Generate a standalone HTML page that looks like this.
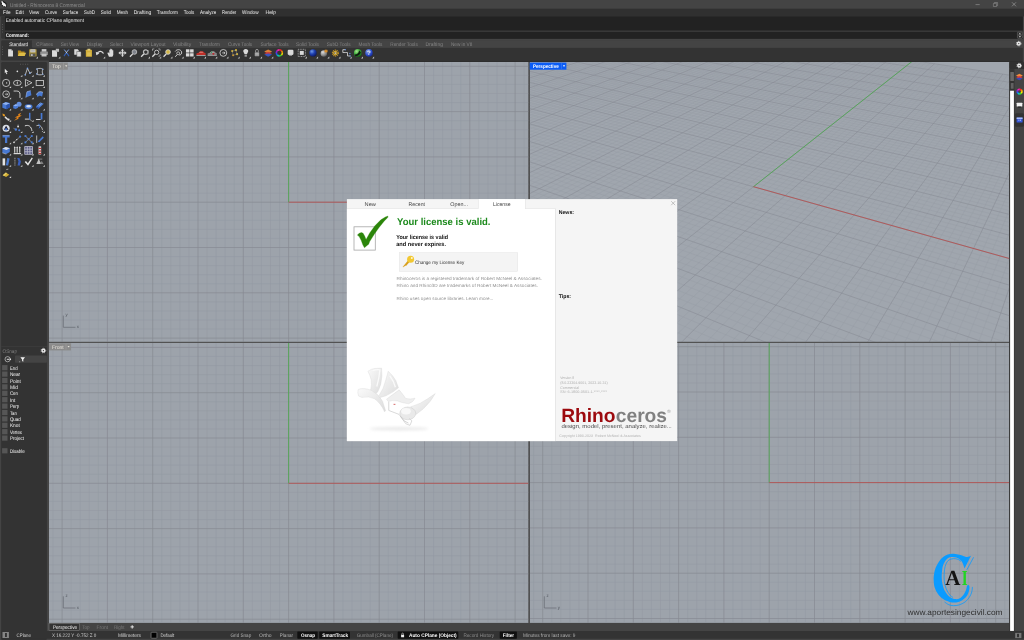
<!DOCTYPE html>
<html><head><meta charset="utf-8"><title>Rhinoceros 8</title>
<style>html,body{margin:0;padding:0;background:#333;overflow:hidden}svg{display:block;will-change:transform}text{white-space:pre}</style>
</head><body>
<svg width="1024" height="640" viewBox="0 0 1024 640" text-rendering="geometricPrecision">
<defs>
<radialGradient id="gblue" cx="0.35" cy="0.3" r="0.8"><stop offset="0" stop-color="#7aa8ff"/><stop offset="0.45" stop-color="#1d44c4"/><stop offset="1" stop-color="#040c58"/></radialGradient>
<radialGradient id="ggray" cx="0.35" cy="0.3" r="0.8"><stop offset="0" stop-color="#f4f4f4"/><stop offset="0.6" stop-color="#9a9a9a"/><stop offset="1" stop-color="#555"/></radialGradient>
<radialGradient id="ggreen" cx="0.35" cy="0.3" r="0.8"><stop offset="0" stop-color="#b8ff9a"/><stop offset="0.5" stop-color="#3ab83a"/><stop offset="1" stop-color="#0a5a0a"/></radialGradient>
<radialGradient id="ghelp" cx="0.35" cy="0.3" r="0.8"><stop offset="0" stop-color="#9ab8ff"/><stop offset="0.6" stop-color="#2a50e0"/><stop offset="1" stop-color="#10208a"/></radialGradient>
</defs>
<rect x="0.00" y="0.00" width="1024.00" height="640.00" fill="#444444" />
<g clip-path="url(#ct)">
<clipPath id="ct"><rect x="48.9" y="62.0" width="479.80000000000007" height="279.9"/></clipPath>
<rect x="48.90" y="62.00" width="479.80" height="279.90" fill="#9da3ab" />
<path d="M43.98 62.0V341.9M53.04 62.0V341.9M71.16 62.0V341.9M80.22 62.0V341.9M89.28 62.0V341.9M98.34 62.0V341.9M116.46 62.0V341.9M125.52 62.0V341.9M134.58 62.0V341.9M143.64 62.0V341.9M161.76 62.0V341.9M170.82 62.0V341.9M179.88 62.0V341.9M188.94 62.0V341.9M207.06 62.0V341.9M216.12 62.0V341.9M225.18 62.0V341.9M234.24 62.0V341.9M252.36 62.0V341.9M261.42 62.0V341.9M270.48 62.0V341.9M279.54 62.0V341.9M297.66 62.0V341.9M306.72 62.0V341.9M315.78 62.0V341.9M324.84 62.0V341.9M342.96 62.0V341.9M352.02 62.0V341.9M361.08 62.0V341.9M370.14 62.0V341.9M388.26 62.0V341.9M397.32 62.0V341.9M406.38 62.0V341.9M415.44 62.0V341.9M433.56 62.0V341.9M442.62 62.0V341.9M451.68 62.0V341.9M460.74 62.0V341.9M478.86 62.0V341.9M487.92 62.0V341.9M496.98 62.0V341.9M506.04 62.0V341.9M524.16 62.0V341.9M533.22 62.0V341.9M48.9 57.24H528.7M48.9 75.36H528.7M48.9 84.42H528.7M48.9 93.48H528.7M48.9 102.54H528.7M48.9 120.66H528.7M48.9 129.72H528.7M48.9 138.78H528.7M48.9 147.84H528.7M48.9 165.96H528.7M48.9 175.02H528.7M48.9 184.08H528.7M48.9 193.14H528.7M48.9 211.26H528.7M48.9 220.32H528.7M48.9 229.38H528.7M48.9 238.44H528.7M48.9 256.56H528.7M48.9 265.62H528.7M48.9 274.68H528.7M48.9 283.74H528.7M48.9 301.86H528.7M48.9 310.92H528.7M48.9 319.98H528.7M48.9 329.04H528.7M48.9 347.16H528.7" stroke="#9399a2" stroke-width="0.5" fill="none"/>
<path d="M62.10 62.0V341.9M107.40 62.0V341.9M152.70 62.0V341.9M198.00 62.0V341.9M243.30 62.0V341.9M288.60 62.0V341.9M333.90 62.0V341.9M379.20 62.0V341.9M424.50 62.0V341.9M469.80 62.0V341.9M515.10 62.0V341.9M48.9 66.30H528.7M48.9 111.60H528.7M48.9 156.90H528.7M48.9 202.20H528.7M48.9 247.50H528.7M48.9 292.80H528.7M48.9 338.10H528.7" stroke="#868a92" stroke-width="0.7" fill="none"/>
<path d="M288.60 202.20V62.0" stroke="#52a655" stroke-width="0.9" fill="none"/>
<path d="M288.60 202.20H528.7" stroke="#b25454" stroke-width="0.9" fill="none"/>
</g>
<g clip-path="url(#cf)">
<clipPath id="cf"><rect x="48.9" y="342.9" width="479.80000000000007" height="280.0"/></clipPath>
<rect x="48.90" y="342.90" width="479.80" height="280.00" fill="#9da3ab" />
<path d="M43.98 342.9V622.9M53.04 342.9V622.9M71.16 342.9V622.9M80.22 342.9V622.9M89.28 342.9V622.9M98.34 342.9V622.9M116.46 342.9V622.9M125.52 342.9V622.9M134.58 342.9V622.9M143.64 342.9V622.9M161.76 342.9V622.9M170.82 342.9V622.9M179.88 342.9V622.9M188.94 342.9V622.9M207.06 342.9V622.9M216.12 342.9V622.9M225.18 342.9V622.9M234.24 342.9V622.9M252.36 342.9V622.9M261.42 342.9V622.9M270.48 342.9V622.9M279.54 342.9V622.9M297.66 342.9V622.9M306.72 342.9V622.9M315.78 342.9V622.9M324.84 342.9V622.9M342.96 342.9V622.9M352.02 342.9V622.9M361.08 342.9V622.9M370.14 342.9V622.9M388.26 342.9V622.9M397.32 342.9V622.9M406.38 342.9V622.9M415.44 342.9V622.9M433.56 342.9V622.9M442.62 342.9V622.9M451.68 342.9V622.9M460.74 342.9V622.9M478.86 342.9V622.9M487.92 342.9V622.9M496.98 342.9V622.9M506.04 342.9V622.9M524.16 342.9V622.9M533.22 342.9V622.9M48.9 338.34H528.7M48.9 356.46H528.7M48.9 365.52H528.7M48.9 374.58H528.7M48.9 383.64H528.7M48.9 401.76H528.7M48.9 410.82H528.7M48.9 419.88H528.7M48.9 428.94H528.7M48.9 447.06H528.7M48.9 456.12H528.7M48.9 465.18H528.7M48.9 474.24H528.7M48.9 492.36H528.7M48.9 501.42H528.7M48.9 510.48H528.7M48.9 519.54H528.7M48.9 537.66H528.7M48.9 546.72H528.7M48.9 555.78H528.7M48.9 564.84H528.7M48.9 582.96H528.7M48.9 592.02H528.7M48.9 601.08H528.7M48.9 610.14H528.7M48.9 628.26H528.7" stroke="#9399a2" stroke-width="0.5" fill="none"/>
<path d="M62.10 342.9V622.9M107.40 342.9V622.9M152.70 342.9V622.9M198.00 342.9V622.9M243.30 342.9V622.9M288.60 342.9V622.9M333.90 342.9V622.9M379.20 342.9V622.9M424.50 342.9V622.9M469.80 342.9V622.9M515.10 342.9V622.9M48.9 347.40H528.7M48.9 392.70H528.7M48.9 438.00H528.7M48.9 483.30H528.7M48.9 528.60H528.7M48.9 573.90H528.7M48.9 619.20H528.7" stroke="#868a92" stroke-width="0.7" fill="none"/>
<path d="M288.60 483.30V342.9" stroke="#52a655" stroke-width="0.9" fill="none"/>
<path d="M288.60 483.30H528.7" stroke="#b25454" stroke-width="0.9" fill="none"/>
</g>
<g clip-path="url(#cr)">
<clipPath id="cr"><rect x="529.7" y="342.9" width="479.5999999999999" height="280.0"/></clipPath>
<rect x="529.70" y="342.90" width="479.60" height="280.00" fill="#9da3ab" />
<path d="M524.58 342.9V622.9M533.64 342.9V622.9M551.76 342.9V622.9M560.82 342.9V622.9M569.88 342.9V622.9M578.94 342.9V622.9M597.06 342.9V622.9M606.12 342.9V622.9M615.18 342.9V622.9M624.24 342.9V622.9M642.36 342.9V622.9M651.42 342.9V622.9M660.48 342.9V622.9M669.54 342.9V622.9M687.66 342.9V622.9M696.72 342.9V622.9M705.78 342.9V622.9M714.84 342.9V622.9M732.96 342.9V622.9M742.02 342.9V622.9M751.08 342.9V622.9M760.14 342.9V622.9M778.26 342.9V622.9M787.32 342.9V622.9M796.38 342.9V622.9M805.44 342.9V622.9M823.56 342.9V622.9M832.62 342.9V622.9M841.68 342.9V622.9M850.74 342.9V622.9M868.86 342.9V622.9M877.92 342.9V622.9M886.98 342.9V622.9M896.04 342.9V622.9M914.16 342.9V622.9M923.22 342.9V622.9M932.28 342.9V622.9M941.34 342.9V622.9M959.46 342.9V622.9M968.52 342.9V622.9M977.58 342.9V622.9M986.64 342.9V622.9M1004.76 342.9V622.9M1013.82 342.9V622.9M529.7 337.64H1009.3M529.7 355.76H1009.3M529.7 364.82H1009.3M529.7 373.88H1009.3M529.7 382.94H1009.3M529.7 401.06H1009.3M529.7 410.12H1009.3M529.7 419.18H1009.3M529.7 428.24H1009.3M529.7 446.36H1009.3M529.7 455.42H1009.3M529.7 464.48H1009.3M529.7 473.54H1009.3M529.7 491.66H1009.3M529.7 500.72H1009.3M529.7 509.78H1009.3M529.7 518.84H1009.3M529.7 536.96H1009.3M529.7 546.02H1009.3M529.7 555.08H1009.3M529.7 564.14H1009.3M529.7 582.26H1009.3M529.7 591.32H1009.3M529.7 600.38H1009.3M529.7 609.44H1009.3M529.7 627.56H1009.3" stroke="#9399a2" stroke-width="0.5" fill="none"/>
<path d="M542.70 342.9V622.9M588.00 342.9V622.9M633.30 342.9V622.9M678.60 342.9V622.9M723.90 342.9V622.9M769.20 342.9V622.9M814.50 342.9V622.9M859.80 342.9V622.9M905.10 342.9V622.9M950.40 342.9V622.9M995.70 342.9V622.9M529.7 346.70H1009.3M529.7 392.00H1009.3M529.7 437.30H1009.3M529.7 482.60H1009.3M529.7 527.90H1009.3M529.7 573.20H1009.3M529.7 618.50H1009.3" stroke="#868a92" stroke-width="0.7" fill="none"/>
<path d="M769.20 482.60V342.9" stroke="#52a655" stroke-width="0.9" fill="none"/>
<path d="M769.20 482.60H1009.3" stroke="#b25454" stroke-width="0.9" fill="none"/>
</g>
<clipPath id="cp"><rect x="529.7" y="62.0" width="479.5999999999999" height="279.9"/></clipPath>
<g clip-path="url(#cp)">
<rect x="529.70" y="62.00" width="479.60" height="279.90" fill="#a0a6ae" />
<path d="M-248.1 318.9L675.3 24.3M-230.4 309.4L909.9 3049.7M-246.8 322.4L678.2 24.7M-211.9 303.5L1060.5 3051.1M-245.5 326.0L681.0 25.2M-193.9 297.8L1211.0 3052.5M-244.1 329.7L683.9 25.6M-176.3 292.3L1361.6 3053.9M-241.3 337.1L689.7 26.5M-142.6 281.6L1662.7 3056.7M-239.9 340.9L692.6 26.9M-126.3 276.5L1813.3 3058.1M-238.5 344.8L695.5 27.4M-110.5 271.5L1963.8 3059.5M-237.0 348.8L698.5 27.8M-95.1 266.6L2114.4 3060.9M-234.1 356.9L704.4 28.7M-65.3 257.2L2415.5 3063.7M-232.5 361.0L707.4 29.2M-50.9 252.6L2566.1 3065.1M-231.0 365.2L710.4 29.6M-36.9 248.2L2716.7 3066.5M-229.4 369.5L713.4 30.1M-23.2 243.9L2867.2 3067.9M-226.1 378.3L719.5 31.0M3.3 235.5L2754.6 2700.1M-224.5 382.8L722.6 31.5M16.1 231.4L2629.1 2478.9M-222.8 387.4L725.7 32.0M28.6 227.5L2521.9 2289.8M-221.1 392.1L728.8 32.4M40.9 223.6L2429.2 2126.3M-217.5 401.7L735.1 33.4M64.6 216.1L2276.9 1857.7M-215.7 406.6L738.2 33.9M76.0 212.5L2213.6 1746.1M-213.8 411.6L741.4 34.3M87.3 208.9L2157.0 1646.3M-212.0 416.8L744.6 34.8M98.3 205.5L2106.2 1556.6M-208.1 427.3L751.0 35.8M119.6 198.7L2018.5 1402.0M-206.1 432.7L754.3 36.3M130.0 195.4L1980.4 1334.9M-204.0 438.2L757.5 36.8M140.1 192.2L1945.6 1273.4M-202.0 443.8L760.8 37.3M150.0 189.1L1913.5 1216.9M-197.7 455.4L767.5 38.3M169.4 183.0L1856.6 1116.5M-195.5 461.3L770.8 38.8M178.7 180.0L1831.2 1071.7M-193.3 467.4L774.1 39.3M187.9 177.1L1807.6 1030.0M-191.0 473.6L777.5 39.8M197.0 174.2L1785.5 991.2M-186.3 486.4L784.3 40.9M214.5 168.7L1745.6 920.8M-183.8 493.0L787.8 41.4M223.1 166.0L1727.5 888.8M-181.3 499.7L791.2 41.9M231.4 163.3L1710.4 858.7M-178.8 506.6L794.7 42.5M239.7 160.7L1694.3 830.4M-173.6 520.8L801.7 43.5M255.7 155.7L1664.8 778.3M-170.8 528.1L805.2 44.1M263.5 153.2L1651.2 754.3M-168.1 535.6L808.8 44.6M271.2 150.8L1638.3 731.6M-165.2 543.3L812.4 45.1M278.7 148.4L1626.1 710.0M-159.4 559.2L819.6 46.2M293.4 143.7L1603.3 669.9M-156.3 567.4L823.2 46.8M300.6 141.5L1592.8 651.3M-153.2 575.8L826.9 47.4M307.6 139.2L1582.7 633.5M-150.1 584.4L830.6 47.9M314.6 137.1L1573.0 616.5M-143.5 602.3L838.0 49.0M328.1 132.8L1555.0 584.7M-140.0 611.6L841.7 49.6M334.7 130.7L1546.6 569.8M-136.5 621.1L845.5 50.2M341.2 128.6L1538.4 555.5M-132.9 630.8L849.3 50.8M347.6 126.6L1530.7 541.8M-125.5 651.1L857.0 51.9M360.1 122.7L1516.0 515.9M-121.6 661.6L860.8 52.5M366.2 120.7L1509.1 503.7M-117.6 672.4L864.7 53.1M372.2 118.8L1502.4 492.0M-113.5 683.5L868.6 53.7M378.1 117.0L1496.0 480.7M-104.9 706.7L876.5 54.9M389.7 113.3L1483.9 459.2M-100.5 718.8L880.5 55.5M395.3 111.5L1478.1 449.1M-95.9 731.2L884.5 56.1M400.9 109.8L1472.6 439.3M-91.2 744.0L888.5 56.7M406.4 108.0L1467.2 429.8M-81.3 770.7L896.7 58.0M417.1 104.6L1457.0 411.8M-76.2 784.6L900.8 58.6M422.4 103.0L1452.1 403.2M-70.9 799.1L904.9 59.2M427.6 101.3L1447.4 394.9M-65.4 813.9L909.1 59.9M432.7 99.7L1442.8 386.8M-53.9 845.1L917.5 61.1M442.7 96.5L1434.1 371.4M-47.8 861.5L921.7 61.8M447.6 95.0L1429.9 364.0M-41.6 878.4L926.0 62.4M452.4 93.5L1425.8 356.9M-35.1 895.9L930.2 63.1M457.2 92.0L1421.9 349.9M-21.5 932.7L938.9 64.4M466.5 89.0L1414.4 336.6M-14.3 952.2L943.3 65.1M471.1 87.6L1410.7 330.3M-6.9 972.3L947.7 65.7M475.6 86.1L1407.2 324.1M0.8 993.2L952.1 66.4M480.0 84.7L1403.8 318.0M17.1 1037.4L961.1 67.8M488.8 82.0L1397.2 306.4M25.8 1060.9L965.6 68.5M493.1 80.6L1394.1 300.8M34.8 1085.3L970.1 69.2M497.3 79.3L1391.0 295.4M44.2 1110.7L974.7 69.8M501.5 78.0L1388.0 290.1M64.1 1164.8L984.0 71.3M509.6 75.4L1382.2 279.9M74.8 1193.6L988.6 72.0M513.7 74.1L1379.4 275.0M85.9 1223.7L993.3 72.7M517.6 72.8L1376.7 270.2M97.5 1255.3L998.1 73.4M521.5 71.6L1374.0 265.5M122.5 1322.9L1007.6 74.9M529.2 69.2L1368.9 256.4M135.9 1359.2L1012.5 75.6M533.0 68.0L1366.4 252.0M150.0 1397.4L1017.3 76.3M536.7 66.8L1364.0 247.8M164.8 1437.6L1022.2 77.1M540.4 65.6L1361.6 243.6M196.9 1524.6L1032.1 78.6M547.7 63.3L1357.0 235.5M214.3 1571.7L1037.1 79.3M551.2 62.2L1354.8 231.6M232.8 1621.7L1042.2 80.1M554.7 61.1L1352.6 227.8M252.3 1674.6L1047.2 80.9M558.2 60.0L1350.5 224.0M295.1 1790.6L1057.5 82.4M565.0 57.9L1346.4 216.7M318.7 1854.3L1062.6 83.2M568.4 56.8L1344.4 213.2M343.8 1922.4L1067.9 84.0M571.7 55.7L1342.4 209.8M370.7 1995.3L1073.1 84.8M575.0 54.7L1340.5 206.4M430.6 2157.7L1083.7 86.4M581.4 52.7L1336.8 199.8M464.2 2248.5L1089.1 87.3M584.6 51.7L1335.0 196.7M500.4 2346.8L1094.5 88.1M587.7 50.7L1333.2 193.5M539.8 2453.5L1099.9 88.9M590.9 49.7L1331.5 190.5M629.7 2697.0L1110.9 90.6M597.0 47.8L1328.1 184.5M681.2 2836.7L1116.5 91.4M600.0 46.8L1326.5 181.6M738.1 2990.9L1122.1 92.3M602.9 45.9L1324.8 178.8M813.3 3048.8L1127.7 93.1M605.9 44.9L1323.3 176.0M978.7 3050.4L1139.1 94.9M611.6 43.1L1320.2 170.6M1061.4 3051.1L1144.9 95.7M614.5 42.2L1318.7 167.9M1144.1 3051.9L1150.7 96.6M617.3 41.3L1317.2 165.3M1226.8 3052.7L1156.5 97.5M620.1 40.4L1315.8 162.8M1392.2 3054.2L1168.4 99.3M625.6 38.7L1312.9 157.8M1474.9 3055.0L1174.3 100.2M628.3 37.9L1311.6 155.4M1557.6 3055.7L1180.4 101.1M630.9 37.0L1310.2 153.0M1640.4 3056.5L1186.4 102.1M633.6 36.2L1308.9 150.6M1805.8 3058.1L1198.7 103.9M638.8 34.5L1306.3 146.1M1888.5 3058.8L1204.9 104.9M641.4 33.7L1305.0 143.9M1971.2 3059.6L1211.2 105.8M643.9 32.9L1303.8 141.7M2053.9 3060.4L1217.5 106.8M646.4 32.1L1302.6 139.5M2219.3 3061.9L1230.3 108.7M651.4 30.6L1300.2 135.3M2302.0 3062.7L1236.7 109.7M653.8 29.8L1299.0 133.2M2384.7 3063.4L1243.3 110.7M656.2 29.0L1297.9 131.2M2467.4 3064.2L1249.8 111.7M658.6 28.3L1296.7 129.2M2632.8 3065.8L1263.1 113.7M663.3 26.8L1294.5 125.3M2715.6 3066.5L1269.8 114.8M665.7 26.0L1293.4 123.4M2798.3 3067.3L1276.6 115.8M668.0 25.3L1292.4 121.5M2881.0 3068.1L1283.4 116.8M670.3 24.6L1291.3 119.7" stroke="#9399a2" stroke-width="0.4" fill="none" opacity="0.85"/>
<path d="M-249.4 315.4L672.5 23.9M-249.4 315.4L759.3 3048.3M-242.7 333.4L686.8 26.0M-159.2 286.9L1512.2 3055.3M-235.6 352.8L701.4 28.3M-80.0 261.8L2265.0 3062.3M-227.8 373.9L716.5 30.6M-9.8 239.6L2903.3 2962.3M-219.3 396.9L731.9 32.9M52.8 219.8L2348.2 1983.5M-210.0 422.0L747.8 35.3M109.1 202.0L2060.2 1475.6M-199.9 449.5L764.1 37.8M159.8 186.0L1883.9 1164.7M-188.6 479.9L780.9 40.4M205.8 171.4L1764.9 954.8M-176.2 513.6L798.2 43.0M247.8 158.2L1679.2 803.6M-162.3 551.2L816.0 45.7M286.1 146.0L1614.4 689.4M-146.8 593.3L834.3 48.5M321.4 134.9L1563.8 600.2M-129.3 640.8L853.1 51.3M353.9 124.6L1523.2 528.6M-109.3 694.9L872.5 54.3M383.9 115.1L1489.9 469.8M-86.3 757.1L892.6 57.3M411.8 106.3L1462.0 420.6M-59.7 829.3L913.2 60.5M437.7 98.1L1438.4 379.0M-28.4 914.0L934.6 63.7M461.9 90.5L1418.1 343.2M8.8 1014.9L956.6 67.1M484.4 83.3L1400.5 312.1M53.9 1137.1L979.3 70.6M505.6 76.7L1385.0 284.9M109.7 1288.3L1002.8 74.1M525.4 70.4L1371.4 260.9M180.4 1479.9L1027.2 77.8M544.1 64.5L1359.3 239.5M273.1 1730.8L1052.3 81.7M561.6 58.9L1348.4 220.3M399.6 2073.5L1078.4 85.6M578.2 53.7L1338.6 203.1M582.7 2569.8L1105.4 89.7M593.9 48.7L1329.8 187.5M896.0 3049.6L1133.4 94.0M608.8 44.0L1321.7 173.2M1309.5 3053.4L1162.4 98.4M622.8 39.6L1314.3 160.3M1723.1 3057.3L1192.6 103.0M636.2 35.3L1307.6 148.3M2136.6 3061.1L1223.9 107.8M648.9 31.3L1301.4 137.4M2550.1 3065.0L1256.4 112.7M661.0 27.5L1295.6 127.3M2963.7 3068.8L1290.3 117.9M672.5 23.9L1290.3 117.9" stroke="#868a92" stroke-width="0.55" fill="none"/>
<path d="M753.5 186.7L913.2 60.5" stroke="#52a655" stroke-width="0.9" fill="none"/>
<path d="M753.5 186.7L1438.4 379.0" stroke="#b25454" stroke-width="0.9" fill="none"/>
</g>
<rect x="528.70" y="62.00" width="1.00" height="560.90" fill="#555" />
<rect x="48.90" y="341.90" width="960.40" height="1.00" fill="#555" />
<path d="M63.3 315.6V327.3H75.5" stroke="#6c7078" stroke-width="0.8" fill="none"/>
<text x="65.50" y="316.05"  font-size="4.3" fill="#50555c" font-weight="normal" font-family="Liberation Sans" >y</text>
<text x="76.70" y="327.85"  font-size="4.3" fill="#50555c" font-weight="normal" font-family="Liberation Sans" >x</text>
<path d="M63.3 596.3V608.0H75.5" stroke="#6c7078" stroke-width="0.8" fill="none"/>
<text x="65.50" y="596.75"  font-size="4.3" fill="#50555c" font-weight="normal" font-family="Liberation Sans" >z</text>
<text x="76.70" y="608.55"  font-size="4.3" fill="#50555c" font-weight="normal" font-family="Liberation Sans" >x</text>
<path d="M544.3 596.3V608.0H556.5" stroke="#6c7078" stroke-width="0.8" fill="none"/>
<text x="546.50" y="596.75"  font-size="4.3" fill="#50555c" font-weight="normal" font-family="Liberation Sans" >z</text>
<text x="557.70" y="608.55"  font-size="4.3" fill="#50555c" font-weight="normal" font-family="Liberation Sans" >y</text>
<rect x="48.90" y="62.60" width="18.90" height="7.10" fill="#8b8b8b" />
<text x="51.90" y="67.87" textLength="8.90" lengthAdjust="spacingAndGlyphs" font-size="5.2" fill="#e8e4dc" font-weight="normal" font-family="Liberation Sans" >Top</text>
<path d="M63.6 63.2V68.9" stroke="#e8e4dc" stroke-width="0.3" opacity="0.5"/>
<path d="M65.10000000000001 65.3h2.2l-1.1 1.6z" fill="#e8e4dc"/>
<rect x="48.90" y="343.30" width="22.10" height="7.10" fill="#8b8b8b" />
<text x="51.90" y="348.57" textLength="11.90" lengthAdjust="spacingAndGlyphs" font-size="5.2" fill="#e8e4dc" font-weight="normal" font-family="Liberation Sans" >Front</text>
<path d="M66.0 343.90000000000003V349.6" stroke="#e8e4dc" stroke-width="0.3" opacity="0.5"/>
<path d="M67.5 346.0h2.2l-1.1 1.6z" fill="#e8e4dc"/>
<rect x="529.70" y="62.60" width="36.70" height="7.10" fill="#0b5cf5" />
<text x="532.90" y="67.87" textLength="25.90" lengthAdjust="spacingAndGlyphs" font-size="5.2" fill="#ffffff" font-weight="bold" font-family="Liberation Sans" >Perspective</text>
<path d="M561.4 63.2V68.9" stroke="#ffffff" stroke-width="0.3" opacity="0.5"/>
<path d="M562.9 65.3h2.2l-1.1 1.6z" fill="#ffffff"/>
<rect x="0.00" y="8.70" width="1024.00" height="7.70" fill="#303030" />
<rect x="1.20" y="16.40" width="1021.60" height="22.35" fill="#333333" rx="1.2"/>
<rect x="5.00" y="16.40" width="1017.80" height="14.40" fill="#222222" />
<rect x="5.00" y="30.80" width="1017.80" height="0.80" fill="#565656" />
<rect x="5.00" y="31.60" width="1017.80" height="7.15" fill="#222222" />
<rect x="2.20" y="24.20" width="0.70" height="0.70" fill="#777" />
<rect x="2.20" y="26.70" width="0.70" height="0.70" fill="#777" />
<rect x="2.20" y="29.20" width="0.70" height="0.70" fill="#777" />
<rect x="2.20" y="31.70" width="0.70" height="0.70" fill="#777" />
<g transform="translate(0.7,0.9)"><path d="M0 0.6L2.6 0 5.8 2.4 5.8 6.4 3 6.4 0 3.4z" fill="#161616"/><path d="M0.3 0.7L2 0.4 2.9 1.8 4.4 2.6 5.4 4.4 5.1 6 3.9 5.2 3.1 5.8 2.2 4.4 0.9 3.6 1.3 2.3z" fill="#f4f4f4"/></g>
<text x="10.00" y="6.84" textLength="74.80" lengthAdjust="spacingAndGlyphs" font-size="5.4" fill="#8d8d8d" font-weight="normal" font-family="Liberation Sans" >Untitled - Rhinoceros 8 Commercial</text>
<path d="M975.5 4.6h4.2" stroke="#9a9a9a" stroke-width="0.6"/>
<path d="M993.4 3.4h3.2v3.1h-3.2zM994.4 3.4v-0.9h3.2v3.1h-1" stroke="#9a9a9a" stroke-width="0.5" fill="none"/>
<path d="M1012 2.3l4 4M1016 2.3l-4 4" stroke="#a8a8a8" stroke-width="0.6"/>
<text x="3.00" y="14.11" textLength="7.50" lengthAdjust="spacingAndGlyphs" font-size="5.3" fill="#f0f0f0" font-weight="normal" font-family="Liberation Sans" >File</text>
<text x="15.50" y="14.11" textLength="8.25" lengthAdjust="spacingAndGlyphs" font-size="5.3" fill="#f0f0f0" font-weight="normal" font-family="Liberation Sans" >Edit</text>
<text x="29.00" y="14.11" textLength="10.25" lengthAdjust="spacingAndGlyphs" font-size="5.3" fill="#f0f0f0" font-weight="normal" font-family="Liberation Sans" >View</text>
<text x="45.00" y="14.11" textLength="12.00" lengthAdjust="spacingAndGlyphs" font-size="5.3" fill="#f0f0f0" font-weight="normal" font-family="Liberation Sans" >Curve</text>
<text x="62.75" y="14.11" textLength="15.50" lengthAdjust="spacingAndGlyphs" font-size="5.3" fill="#f0f0f0" font-weight="normal" font-family="Liberation Sans" >Surface</text>
<text x="84.00" y="14.11" textLength="11.00" lengthAdjust="spacingAndGlyphs" font-size="5.3" fill="#f0f0f0" font-weight="normal" font-family="Liberation Sans" >SubD</text>
<text x="100.75" y="14.11" textLength="10.25" lengthAdjust="spacingAndGlyphs" font-size="5.3" fill="#f0f0f0" font-weight="normal" font-family="Liberation Sans" >Solid</text>
<text x="116.75" y="14.11" textLength="11.25" lengthAdjust="spacingAndGlyphs" font-size="5.3" fill="#f0f0f0" font-weight="normal" font-family="Liberation Sans" >Mesh</text>
<text x="133.75" y="14.11" textLength="17.50" lengthAdjust="spacingAndGlyphs" font-size="5.3" fill="#f0f0f0" font-weight="normal" font-family="Liberation Sans" >Drafting</text>
<text x="156.75" y="14.11" textLength="21.25" lengthAdjust="spacingAndGlyphs" font-size="5.3" fill="#f0f0f0" font-weight="normal" font-family="Liberation Sans" >Transform</text>
<text x="183.75" y="14.11" textLength="10.50" lengthAdjust="spacingAndGlyphs" font-size="5.3" fill="#f0f0f0" font-weight="normal" font-family="Liberation Sans" >Tools</text>
<text x="200.00" y="14.11" textLength="16.25" lengthAdjust="spacingAndGlyphs" font-size="5.3" fill="#f0f0f0" font-weight="normal" font-family="Liberation Sans" >Analyze</text>
<text x="222.00" y="14.11" textLength="14.25" lengthAdjust="spacingAndGlyphs" font-size="5.3" fill="#f0f0f0" font-weight="normal" font-family="Liberation Sans" >Render</text>
<text x="242.00" y="14.11" textLength="16.50" lengthAdjust="spacingAndGlyphs" font-size="5.3" fill="#f0f0f0" font-weight="normal" font-family="Liberation Sans" >Window</text>
<text x="265.50" y="14.11" textLength="10.50" lengthAdjust="spacingAndGlyphs" font-size="5.3" fill="#f0f0f0" font-weight="normal" font-family="Liberation Sans" >Help</text>
<text x="5.70" y="21.97" textLength="78.30" lengthAdjust="spacingAndGlyphs" font-size="5.2" fill="#e4e4e4" font-weight="normal" font-family="Liberation Sans" >Enabled automatic CPlane alignment</text>
<text x="5.70" y="36.77" textLength="23.30" lengthAdjust="spacingAndGlyphs" font-size="5.2" fill="#f4f4f4" font-weight="bold" font-family="Liberation Sans" >Command:</text>
<rect x="1017.4" y="32.1" width="5" height="3" fill="#2a2a2a" stroke="#8a8a8a" stroke-width="0.4" rx="0.5"/><rect x="1017.4" y="35.3" width="5" height="3" fill="#2a2a2a" stroke="#8a8a8a" stroke-width="0.4" rx="0.5"/>
<path d="M1018.8 34.2l1.1-1.2 1.1 1.2zM1018.8 36.2l1.1 1.2 1.1-1.2z" fill="#f4f4f4"/>
<rect x="1.20" y="40.20" width="1021.60" height="20.30" fill="#333333" rx="1.3"/>
<rect x="48.90" y="60.40" width="973.90" height="1.60" fill="#2d2d2d" />
<rect x="31.90" y="40.20" width="992.10" height="7.50" fill="#444444" rx="1.2"/>
<rect x="40.00" y="40.20" width="984.00" height="7.50" fill="#444444" />
<rect x="31.90" y="40.20" width="10.00" height="3.00" fill="#444444" />
<rect x="2.20" y="46.60" width="0.70" height="0.70" fill="#777" />
<rect x="2.20" y="49.10" width="0.70" height="0.70" fill="#777" />
<rect x="2.20" y="51.60" width="0.70" height="0.70" fill="#777" />
<rect x="2.20" y="54.10" width="0.70" height="0.70" fill="#777" />
<text x="9.25" y="45.77" textLength="18.75" lengthAdjust="spacingAndGlyphs" font-size="5.2" fill="#f0f0f0" font-weight="normal" font-family="Liberation Sans" >Standard</text>
<text x="36.25" y="45.77" textLength="16.75" lengthAdjust="spacingAndGlyphs" font-size="5.2" fill="#858585" font-weight="normal" font-family="Liberation Sans" >CPlanes</text>
<text x="60.75" y="45.77" textLength="18.25" lengthAdjust="spacingAndGlyphs" font-size="5.2" fill="#858585" font-weight="normal" font-family="Liberation Sans" >Set View</text>
<text x="86.75" y="45.77" textLength="15.75" lengthAdjust="spacingAndGlyphs" font-size="5.2" fill="#858585" font-weight="normal" font-family="Liberation Sans" >Display</text>
<text x="110.00" y="45.77" textLength="13.00" lengthAdjust="spacingAndGlyphs" font-size="5.2" fill="#858585" font-weight="normal" font-family="Liberation Sans" >Select</text>
<text x="130.50" y="45.77" textLength="35.00" lengthAdjust="spacingAndGlyphs" font-size="5.2" fill="#858585" font-weight="normal" font-family="Liberation Sans" >Viewport Layout</text>
<text x="173.00" y="45.77" textLength="18.25" lengthAdjust="spacingAndGlyphs" font-size="5.2" fill="#858585" font-weight="normal" font-family="Liberation Sans" >Visibility</text>
<text x="199.00" y="45.77" textLength="21.00" lengthAdjust="spacingAndGlyphs" font-size="5.2" fill="#858585" font-weight="normal" font-family="Liberation Sans" >Transform</text>
<text x="228.00" y="45.77" textLength="24.00" lengthAdjust="spacingAndGlyphs" font-size="5.2" fill="#858585" font-weight="normal" font-family="Liberation Sans" >Curve Tools</text>
<text x="260.50" y="45.77" textLength="28.00" lengthAdjust="spacingAndGlyphs" font-size="5.2" fill="#858585" font-weight="normal" font-family="Liberation Sans" >Surface Tools</text>
<text x="296.00" y="45.77" textLength="23.00" lengthAdjust="spacingAndGlyphs" font-size="5.2" fill="#858585" font-weight="normal" font-family="Liberation Sans" >Solid Tools</text>
<text x="326.75" y="45.77" textLength="23.75" lengthAdjust="spacingAndGlyphs" font-size="5.2" fill="#858585" font-weight="normal" font-family="Liberation Sans" >SubD Tools</text>
<text x="358.50" y="45.77" textLength="23.75" lengthAdjust="spacingAndGlyphs" font-size="5.2" fill="#858585" font-weight="normal" font-family="Liberation Sans" >Mesh Tools</text>
<text x="390.25" y="45.77" textLength="27.50" lengthAdjust="spacingAndGlyphs" font-size="5.2" fill="#858585" font-weight="normal" font-family="Liberation Sans" >Render Tools</text>
<text x="425.50" y="45.77" textLength="17.50" lengthAdjust="spacingAndGlyphs" font-size="5.2" fill="#858585" font-weight="normal" font-family="Liberation Sans" >Drafting</text>
<text x="451.00" y="45.77" textLength="21.25" lengthAdjust="spacingAndGlyphs" font-size="5.2" fill="#858585" font-weight="normal" font-family="Liberation Sans" >New in V8</text>
<path d="M9.2 46.7H28" stroke="#cfcfcf" stroke-width="0.3" opacity="0.6"/>
<circle cx="1018.75" cy="43.6" r="1.36" fill="none" stroke="#e8e8e8" stroke-width="1.44"/>
<circle cx="1018.75" cy="43.6" r="2.32" fill="none" stroke="#e8e8e8" stroke-width="0.80" stroke-dasharray="0.88 0.94"/>
<g transform="translate(10.45,52.9) scale(0.9)" opacity="0.88"><path d="M-2.6-4h3.4l2 2v6h-5.4z" fill="#f2f2f2"/><path d="M0.8-4v2h2z" fill="#bbb"/></g>
<g transform="translate(21.66,52.9) scale(0.9)" opacity="0.88"><path d="M-4.2-2.6h3l0.9 1h3.6v5h-7.5z" fill="#c9961a"/><path d="M-4.2 3.4l1.6-3.6h7.6l-1.7 3.6z" fill="#f5d04a"/></g>
<g transform="translate(32.86,52.9) scale(0.9)" opacity="0.88"><rect x="-4.2" y="-4" width="8.4" height="8" fill="#b09838" rx="0.5"/><rect x="-2.8" y="-4" width="5.6" height="3.4" fill="#ececec"/><path d="M-2.2-2.9h4.4M-2.2-1.8h4.4" stroke="#8a8a8a" stroke-width="0.45"/><rect x="-2.8" y="0.8" width="5.6" height="3.2" fill="#5a5a5a"/><rect x="-2" y="1.4" width="1.8" height="2" fill="#d8d8d8"/></g>
<path d="M37.96 56.5v1.9h-1.9z" fill="#c8c8c8"/>
<g transform="translate(44.06,52.9) scale(0.9)" opacity="0.88"><rect x="-2.6" y="-4.2" width="5.2" height="3" fill="#e0e0e0"/><rect x="-4.3" y="-1.6" width="8.6" height="4" fill="#9a9a9a" rx="0.6"/><rect x="-2.8" y="1" width="5.6" height="3" fill="#d8d8d8"/></g>
<g transform="translate(55.27,52.9) scale(0.9)" opacity="0.88"><path d="M-3.6-3h4l1.6 1.6v5.6h-5.6z" fill="#f2f2f2"/><path d="M0.6-4.6h3.6v3.4h-3.6z" fill="#cfcfcf"/></g>
<path d="M60.37 56.5v1.9h-1.9z" fill="#c8c8c8"/>
<g transform="translate(66.47,52.9) scale(0.9)" opacity="0.88"><path d="M-2.4-3.6l3.8 5M2.4-3.6l-3.8 5" stroke="#d8e4f8" stroke-width="0.9" fill="none"/><path d="M-0.4 0.2l-2.4 3.4M0.4 0.2l2.4 3.4" stroke="#2f62c8" stroke-width="1.2" fill="none"/><path d="M-2.4-3.6l1.4 1.8M2.4-3.6l-1.4 1.8" stroke="#3a6ad0" stroke-width="0.9"/></g>
<g transform="translate(77.68,52.9) scale(0.9)" opacity="0.88"><path d="M-3.8-4h3.8l1 1v5h-4.8z" fill="#f2f2f2"/><path d="M-1-1.6h3.8l1 1v5h-4.8z" fill="#f2f2f2" stroke="#444" stroke-width="0.5"/></g>
<g transform="translate(88.89,52.9) scale(0.9)" opacity="0.88"><rect x="-3.4" y="-3.6" width="6.8" height="8" fill="#e8bf3a" rx="0.6"/><rect x="-1.6" y="-4.6" width="3.2" height="2" fill="#f7e08a"/><rect x="-2" y="-0.6" width="4" height="4" fill="#f3d25a"/></g>
<g transform="translate(100.09,52.9) scale(0.9)" opacity="0.88"><path d="M-3.6 1.2c1.5-3.6 5.5-4.2 7.4-0.6" stroke="#f2f2f2" stroke-width="1.4" fill="none"/><path d="M-4.8-1.4l0.6 4 3.4-1.8z" fill="#f2f2f2"/></g>
<path d="M105.19 56.5v1.9h-1.9z" fill="#c8c8c8"/>
<g transform="translate(111.30,52.9) scale(0.9)" opacity="0.88"><path d="M-2.6 4.2l-1.8-4 1-0.8 1.2 1.4v-4.4h1.1v2.6-3.6h1.1v3.6-3h1.1v3.2-2.2h1.1v5.2l-1 2z" fill="#f2f2f2"/></g>
<g transform="translate(122.50,52.9) scale(0.9)" opacity="0.88"><path d="M0-4.6l1.6 1.8h-1v2.2h2.2v-1l1.8 1.6-1.8 1.6v-1h-2.2v2.2h1l-1.6 1.8-1.6-1.8h1v-2.2h-2.2v1l-1.8-1.6 1.8-1.6v1h2.2v-2.2h-1z" fill="#f2f2f2"/><circle cx="0" cy="0" r="2.6" fill="none" stroke="#f2f2f2" stroke-width="0.5"/></g>
<g transform="translate(133.70,52.9) scale(0.9)" opacity="0.88"><circle cx="0.8" cy="-1" r="2.6" fill="#8a8f98" stroke="#dcdcdc" stroke-width="0.9"/><path d="M-1.2 1.2l-3 3" stroke="#f2f2f2" stroke-width="1.4"/></g>
<g transform="translate(144.91,52.9) scale(0.9)" opacity="0.88"><circle cx="0.8" cy="-1" r="2.6" fill="none" stroke="#f2f2f2" stroke-width="0.9"/><path d="M-1.2 1.2l-3 3" stroke="#f2f2f2" stroke-width="1.4"/><rect x="-1" y="-3" width="5.2" height="4.4" fill="none" stroke="#f2f2f2" stroke-width="0.4"/></g>
<path d="M150.01 56.5v1.9h-1.9z" fill="#c8c8c8"/>
<g transform="translate(156.11,52.9) scale(0.9)" opacity="0.88"><circle cx="0.6" cy="-0.6" r="2.4" fill="none" stroke="#f2f2f2" stroke-width="0.9"/><path d="M-1.2 1.2l-3 3" stroke="#f2f2f2" stroke-width="1.4"/><path d="M-4-4.4h2M-4-4.4v2M4.4-4.4h-2M4.4-4.4v2M4.4 3.6h-2M4.4 3.6v-2" stroke="#f2f2f2" stroke-width="0.6" fill="none"/></g>
<path d="M161.21 56.5v1.9h-1.9z" fill="#c8c8c8"/>
<g transform="translate(167.32,52.9) scale(0.9)" opacity="0.88"><circle cx="0.8" cy="-1" r="2.6" fill="#e8c84a" stroke="#f2f2f2" stroke-width="0.9"/><path d="M-1.2 1.2l-3 3" stroke="#f2f2f2" stroke-width="1.4"/></g>
<path d="M172.42 56.5v1.9h-1.9z" fill="#c8c8c8"/>
<g transform="translate(178.52,52.9) scale(0.9)" opacity="0.88"><path d="M-3.6-1.6c1.6-2.8 6-2.6 7 0.4c0.6 2-1 3.6-2.6 3.6" stroke="#f2f2f2" stroke-width="1" fill="none"/><circle cx="-0.4" cy="0.4" r="1.6" fill="none" stroke="#f2f2f2" stroke-width="0.8"/><path d="M-1.6 2l-2 2.4" stroke="#f2f2f2" stroke-width="1"/></g>
<path d="M183.62 56.5v1.9h-1.9z" fill="#c8c8c8"/>
<g transform="translate(189.73,52.9) scale(0.9)" opacity="0.88"><rect x="-4.2" y="-4" width="3.9" height="3.6" fill="#f2f2f2"/><rect x="0.4" y="-4" width="3.9" height="3.6" fill="#f2f2f2"/><rect x="-4.2" y="0.4" width="3.9" height="3.6" fill="#f2f2f2"/><rect x="0.4" y="0.4" width="3.9" height="3.6" fill="#f2f2f2"/></g>
<path d="M194.83 56.5v1.9h-1.9z" fill="#c8c8c8"/>
<g transform="translate(200.94,52.9) scale(0.9)" opacity="0.88"><path d="M-5 2.4v-1.6l2.4-1 1.6-1.6h3.2l1.8 1.6 1.2 0.6v2z" fill="#d43028"/><path d="M-2.4-0.2l1.4-1.2h2.6l1.2 1.2z" fill="#f09088"/><path d="M-5 2.4h10.2v0.8h-10.2z" fill="#ddd"/></g>
<path d="M206.03 56.5v1.9h-1.9z" fill="#c8c8c8"/>
<g transform="translate(212.14,52.9) scale(0.9)" opacity="0.88"><path d="M-5 2.4v-1.6l2.4-1 1.6-1.6h3.2l1.8 1.6 1.2 0.6v2z" fill="#8e8e8e"/><path d="M-2.4-0.2l1.4-1.2h2.6l1.2 1.2z" fill="#c8c8c8"/><path d="M-5 2.4h10.2v0.8h-10.2z" fill="#ccc"/><circle cx="1.4" cy="1" r="1.2" fill="#c83030"/><circle cx="-0.6" cy="-0.8" r="0.8" fill="#30a060"/></g>
<path d="M217.24 56.5v1.9h-1.9z" fill="#c8c8c8"/>
<g transform="translate(223.34,52.9) scale(0.9)" opacity="0.88"><circle cx="0" cy="0" r="3.8" fill="none" stroke="#f2f2f2" stroke-width="0.9"/><path d="M-1.4 0h3.2M0.4-1.2l1.6 1.2-1.6 1.2" stroke="#f2f2f2" stroke-width="0.8" fill="none"/></g>
<path d="M228.44 56.5v1.9h-1.9z" fill="#c8c8c8"/>
<g transform="translate(234.55,52.9) scale(0.9)" opacity="0.88"><circle cx="-2.6" cy="-2" r="1.2" fill="#e8c030"/><circle cx="1.6" cy="-3" r="1.2" fill="#e8c030"/><circle cx="2.8" cy="1.4" r="1.2" fill="#e8c030"/><circle cx="-1.6" cy="2.6" r="1.2" fill="#d89a20"/><path d="M-2.6-2L1.6-3 2.8 1.4-1.6 2.6z" stroke="#bbb" stroke-width="0.4" fill="none"/></g>
<path d="M239.65 56.5v1.9h-1.9z" fill="#c8c8c8"/>
<g transform="translate(245.75,52.9) scale(0.9)" opacity="0.88"><path d="M0-4.4c2.6 0 3.4 2.4 2.2 4l-0.8 1.6h-2.8l-0.8-1.6c-1.2-1.6-0.4-4 2.2-4z" fill="#f2f2f2"/><rect x="-1.3" y="1.8" width="2.6" height="2.4" fill="#aaa"/></g>
<path d="M250.85 56.5v1.9h-1.9z" fill="#c8c8c8"/>
<g transform="translate(256.96,52.9) scale(0.9)" opacity="0.88"><rect x="-2.5" y="-0.8" width="5" height="4.4" fill="#a8a8a8" rx="0.5"/><rect x="-1.8" y="0.8" width="3.6" height="0.7" fill="#ddd"/><path d="M-1.5-0.8v-1.6a1.5 1.5 0 0 1 3 0v1.6" stroke="#c8c8c8" stroke-width="0.8" fill="none"/></g>
<path d="M262.06 56.5v1.9h-1.9z" fill="#c8c8c8"/>
<g transform="translate(268.16,52.9) scale(0.9)" opacity="0.88"><path d="M-4.4-1.6l4.4-2.2 4.4 2.2-4.4 2.2z" fill="#f08a3a"/><path d="M-4.4 0.2l4.4 2.2 4.4-2.2-4.4-1.2z" fill="#e03a3a"/><path d="M-4.4 1.8l4.4 2.4 4.4-2.4-4.4-1z" fill="#3a5ad0"/></g>
<path d="M273.26 56.5v1.9h-1.9z" fill="#c8c8c8"/>
<g transform="translate(279.37,52.9) scale(0.9)" opacity="0.88"><path d="M0.00 -4.20A4.2 4.2 0 0 1 3.11 -2.82L1.78 -1.61A2.4 2.4 0 0 0 0.00 -2.40z" fill="#ff2020"/><path d="M2.97 -2.97A4.2 4.2 0 0 1 4.19 0.21L2.40 0.12A2.4 2.4 0 0 0 1.70 -1.70z" fill="#ff9a00"/><path d="M4.20 0.00A4.2 4.2 0 0 1 2.82 3.11L1.61 1.78A2.4 2.4 0 0 0 2.40 0.00z" fill="#ffe800"/><path d="M2.97 2.97A4.2 4.2 0 0 1 -0.21 4.19L-0.12 2.40A2.4 2.4 0 0 0 1.70 1.70z" fill="#40e020"/><path d="M0.00 4.20A4.2 4.2 0 0 1 -3.11 2.82L-1.78 1.61A2.4 2.4 0 0 0 0.00 2.40z" fill="#00d0c0"/><path d="M-2.97 2.97A4.2 4.2 0 0 1 -4.19 -0.21L-2.40 -0.12A2.4 2.4 0 0 0 -1.70 1.70z" fill="#2060ff"/><path d="M-4.20 0.00A4.2 4.2 0 0 1 -2.82 -3.11L-1.61 -1.78A2.4 2.4 0 0 0 -2.40 0.00z" fill="#9020e0"/><path d="M-2.97 -2.97A4.2 4.2 0 0 1 0.21 -4.19L0.12 -2.40A2.4 2.4 0 0 0 -1.70 -1.70z" fill="#ff20b0"/></g>
<g transform="translate(290.57,52.9) scale(0.9)" opacity="0.88"><rect x="-3.2" y="-3.4" width="6.4" height="5.6" fill="#f2f2f2" rx="1.2"/><rect x="-1.6" y="2.2" width="3.2" height="1.2" fill="#999"/></g>
<g transform="translate(301.78,52.9) scale(0.9)" opacity="0.88"><rect x="-4" y="-4" width="8" height="8" fill="none" stroke="#f2f2f2" stroke-width="0.7" stroke-dasharray="1 0.8"/><rect x="-2.2" y="-2.2" width="4.4" height="4.4" fill="#f2f2f2"/></g>
<path d="M306.88 56.5v1.9h-1.9z" fill="#c8c8c8"/>
<g transform="translate(312.99,52.9) scale(0.9)" opacity="0.88"><circle cx="0" cy="0" r="4.1" fill="url(#gblue)"/></g>
<path d="M318.09 56.5v1.9h-1.9z" fill="#c8c8c8"/>
<g transform="translate(324.19,52.9) scale(0.9)" opacity="0.88"><circle cx="-0.4" cy="0.6" r="3.6" fill="url(#ggray)"/><path d="M2-4.6l0.6 1.6 1.7-0.4-1 1.4 1 1.2-1.7-0.2-0.6 1.6-0.6-1.6-1.6 0.2 1-1.2-1-1.4 1.6 0.4z" fill="#f09a28"/></g>
<path d="M329.29 56.5v1.9h-1.9z" fill="#c8c8c8"/>
<g transform="translate(335.39,52.9) scale(0.9)" opacity="0.88"><circle cx="0" cy="0.2" r="1.9" fill="none" stroke="#e8b830" stroke-width="1.4"/><circle cx="0" cy="0.2" r="3.3" fill="none" stroke="#d8a020" stroke-width="1.3" stroke-dasharray="1.2 0.87"/><circle cx="0" cy="0.2" r="0.9" fill="#fff8d0"/></g>
<path d="M340.50 56.5v1.9h-1.9z" fill="#c8c8c8"/>
<g transform="translate(346.60,52.9) scale(0.9)" opacity="0.88"><path d="M-1.6-3.6h-2.6v3.2h2.6M-1.6-0.4h2.6v3.8h3" fill="none" stroke="#f2f2f2" stroke-width="0.9"/><circle cx="-1.4" cy="-3.6" r="0.8" fill="#6a9af0"/><circle cx="3.6" cy="0.6" r="0.8" fill="#6a9af0"/><circle cx="4" cy="3.4" r="0.8" fill="#6a9af0"/></g>
<path d="M351.70 56.5v1.9h-1.9z" fill="#c8c8c8"/>
<g transform="translate(357.81,52.9) scale(0.9)" opacity="0.88"><circle cx="0" cy="0" r="4.3" fill="url(#ggreen)"/><path d="M-3.6 1.8c2.4 0.2 4.8-1.8 5-4.6c0.8 0.6 1.6 1.4 2 2.4c-1.2 2.8-3.6 4.2-6 4.2z" fill="#0a1a0a"/></g>
<path d="M362.91 56.5v1.9h-1.9z" fill="#c8c8c8"/>
<g transform="translate(369.01,52.9) scale(0.9)" opacity="0.88"><circle cx="0" cy="0" r="4.2" fill="url(#ghelp)"/><text x="0" y="2.6" font-size="7" font-weight="bold" font-family="Liberation Sans" fill="#fff" text-anchor="middle">?</text></g>
<path d="M374.11 56.5v1.9h-1.9z" fill="#c8c8c8"/>
<rect x="1.20" y="62.00" width="45.70" height="578.00" fill="#333333" rx="1.2"/>
<rect x="20.20" y="63.80" width="0.80" height="0.80" fill="#6a6a6a" />
<rect x="22.60" y="63.80" width="0.80" height="0.80" fill="#6a6a6a" />
<rect x="25.00" y="63.80" width="0.80" height="0.80" fill="#6a6a6a" />
<rect x="27.40" y="63.80" width="0.80" height="0.80" fill="#6a6a6a" />
<g transform="translate(6.10,71.70) scale(0.93)" opacity="0.92"><path d="M-1.4-3.2l3.6 3.4h-1.8l1 2.2-1 0.4-1-2.2-0.8 1z" fill="#f2f2f2"/></g>
<g transform="translate(17.35,71.70) scale(0.93)" opacity="0.92"><circle cx="0" cy="-0.4" r="0.9" fill="#f2f2f2"/></g>
<path d="M22.35 74.90v1.9h-1.9z" fill="#d0d0d0"/>
<g transform="translate(28.60,71.70) scale(0.93)" opacity="0.92"><path d="M-3.6 3.4l2.4-7 2.6 5.2 2.4-1.4" stroke="#f2f2f2" stroke-width="0.8" fill="none"/><circle cx="-3.6" cy="3.4" r="0.9" fill="#8ab0f0"/><circle cx="-1.2" cy="-3.6" r="0.9" fill="#8ab0f0"/><circle cx="1.4" cy="1.6" r="0.9" fill="#8ab0f0"/></g>
<path d="M33.60 74.90v1.9h-1.9z" fill="#d0d0d0"/>
<g transform="translate(39.85,71.70) scale(0.93)" opacity="0.92"><path d="M-3.2-3c3-1 5-0.6 6.4 0.4c-0.8 2-0.8 3.6 0 5.4c-2 0.8-4.4 0.8-6.4-0.2c1-2 1-3.6 0-5.6z" stroke="#f2f2f2" stroke-width="0.8" fill="none"/><circle cx="-3.2" cy="-3" r="0.8" fill="#8ab0f0"/><circle cx="3.2" cy="-2.6" r="0.8" fill="#8ab0f0"/><circle cx="3.2" cy="2.8" r="0.8" fill="#8ab0f0"/><circle cx="-3.2" cy="2.6" r="0.8" fill="#8ab0f0"/></g>
<path d="M44.85 74.90v1.9h-1.9z" fill="#d0d0d0"/>
<g transform="translate(6.10,82.95) scale(0.93)" opacity="0.92"><circle cx="0" cy="0" r="3.9" stroke="#f2f2f2" stroke-width="0.8" fill="none"/><circle cx="0.6" cy="0" r="0.7" fill="#f2f2f2"/></g>
<path d="M11.10 86.15v1.9h-1.9z" fill="#d0d0d0"/>
<g transform="translate(17.35,82.95) scale(0.93)" opacity="0.92"><ellipse cx="0" cy="0" rx="4.2" ry="2.8" stroke="#f2f2f2" stroke-width="0.8" fill="none"/><circle cx="0" cy="0" r="0.7" fill="#f2f2f2"/><path d="M0-2.8v5.6" stroke="#f2f2f2" stroke-width="0.4"/></g>
<path d="M22.35 86.15v1.9h-1.9z" fill="#d0d0d0"/>
<g transform="translate(28.60,82.95) scale(0.93)" opacity="0.92"><path d="M-3.4-3.8l7 3.6-7 3.8z" stroke="#f2f2f2" stroke-width="0.8" fill="none"/><circle cx="-1" cy="0" r="0.7" fill="#f2f2f2"/></g>
<path d="M33.60 86.15v1.9h-1.9z" fill="#d0d0d0"/>
<g transform="translate(39.85,82.95) scale(0.93)" opacity="0.92"><rect x="-4" y="-2.6" width="8" height="5.2" stroke="#f2f2f2" stroke-width="0.8" fill="none"/></g>
<path d="M44.85 86.15v1.9h-1.9z" fill="#d0d0d0"/>
<g transform="translate(6.10,94.20) scale(0.93)" opacity="0.92"><circle cx="0" cy="0" r="3.6" stroke="#f2f2f2" stroke-width="0.8" fill="none"/><path d="M-1.2 0h3M0.6-1l1.2 1-1.2 1" stroke="#f2f2f2" stroke-width="0.7" fill="none"/></g>
<path d="M11.10 97.40v1.9h-1.9z" fill="#d0d0d0"/>
<g transform="translate(17.35,94.20) scale(0.93)" opacity="0.92"><path d="M-4-3.4h3.4c2.4 0 3.4 1.4 3.4 3.4v4" stroke="#f2f2f2" stroke-width="0.9" fill="none"/></g>
<path d="M22.35 97.40v1.9h-1.9z" fill="#d0d0d0"/>
<g transform="translate(28.60,94.20) scale(0.93)" opacity="0.92"><path d="M-3 3.6l1.2-6.2 4-1.2 0.8 5z" fill="#4a7fe0"/><path d="M-3 3.6l1.2-6.2 4-1.2" stroke="#b8d0ff" stroke-width="0.6" fill="none"/></g>
<path d="M33.60 97.40v1.9h-1.9z" fill="#d0d0d0"/>
<g transform="translate(39.85,94.20) scale(0.93)" opacity="0.92"><path d="M-3.6 0.6c1-3.4 4.6-4.2 7-2.4l-1 4.6c-1.6-1.4-3.6-1.4-4.6 0.4z" fill="#4a7fe0"/><path d="M-3.6 0.6c1-3.4 4.6-4.2 7-2.4" stroke="#c8dcff" stroke-width="0.7" fill="none"/></g>
<path d="M44.85 97.40v1.9h-1.9z" fill="#d0d0d0"/>
<g transform="translate(6.10,105.45) scale(0.93)" opacity="0.92"><path d="M-4-1.8l3.6-2 4.4 1.2v4.6l-3.8 2-4.2-1.4z" fill="#4a7fe0"/><path d="M-4-1.8l4.2 1.4 3.8-1.8-4.4-1.2z" fill="#9cc0ff"/><path d="M0.2-0.4v4.4l3.8-2v-4.2z" fill="#2a55b8"/></g>
<path d="M11.10 108.65v1.9h-1.9z" fill="#d0d0d0"/>
<g transform="translate(17.35,105.45) scale(0.93)" opacity="0.92"><path d="M-4.4 0l2.6-1.4 2.6 0.8v3l-2.6 1.4-2.6-0.8z" fill="#4a7fe0"/><circle cx="1.8" cy="-1.2" r="2.7" fill="#6a9af0"/><path d="M-4.4 0l2.6 0.8 2.6-1.4-2.6-0.8z" fill="#9cc0ff"/></g>
<path d="M22.35 108.65v1.9h-1.9z" fill="#d0d0d0"/>
<g transform="translate(28.60,105.45) scale(0.93)" opacity="0.92"><ellipse cx="0" cy="1.4" rx="4.2" ry="2.6" fill="#4a7fe0"/><ellipse cx="0" cy="0.8" rx="2.6" ry="1.4" fill="#e8f0ff"/><path d="M-2-2.8a2 0.9 0 1 0 4 0a2 0.9 0 1 0 -4 0" stroke="#223" stroke-width="0.6" fill="none"/></g>
<path d="M33.60 108.65v1.9h-1.9z" fill="#d0d0d0"/>
<g transform="translate(39.85,105.45) scale(0.93)" opacity="0.92"><path d="M-4.2 1.2l5-4.4 3.4 1.4-5 4.6z" fill="#4a7fe0"/><path d="M-4.2 1.2l3.4 1.6v1.4l-3.4-1.6z" fill="#2a55b8"/><path d="M-2.4-0.2l3-2.6M-0.8 0.6l3-2.8" stroke="#c8dcff" stroke-width="0.5"/></g>
<path d="M44.85 108.65v1.9h-1.9z" fill="#d0d0d0"/>
<g transform="translate(6.10,116.70) scale(0.93)" opacity="0.92"><path d="M-4-3.4l2.4 0.8 0.6 2.4-2.4-0.6z" fill="#f0a020"/><path d="M-1.2 0.2l3 2.8" stroke="#f2f2f2" stroke-width="1.6"/><circle cx="2.6" cy="3.2" r="1.2" fill="#f2f2f2"/></g>
<path d="M11.10 119.90v1.9h-1.9z" fill="#d0d0d0"/>
<g transform="translate(17.35,116.70) scale(0.93)" opacity="0.92"><path d="M4.2-4.2l-3.6 1.6 1 1-4.4 2.4 2.8 0.2-3.6 3.4 5-2.2-0.6-1.2 4-2.2-2.4-0.4z" fill="#f08a18"/></g>
<g transform="translate(28.60,116.70) scale(0.93)" opacity="0.92"><path d="M-4 2.6h4.4" stroke="#f2f2f2" stroke-width="1"/><path d="M1.2-4.2v7.6" stroke="#4a7fe0" stroke-width="1.6"/><path d="M1.2 3l2.4 1.6" stroke="#aaa" stroke-width="0.8"/></g>
<path d="M33.60 119.90v1.9h-1.9z" fill="#d0d0d0"/>
<g transform="translate(39.85,116.70) scale(0.93)" opacity="0.92"><path d="M-4.2 3h5" stroke="#f2f2f2" stroke-width="1"/><path d="M1.8-4v7" stroke="#4a7fe0" stroke-width="1.8"/></g>
<path d="M44.85 119.90v1.9h-1.9z" fill="#d0d0d0"/>
<g transform="translate(6.10,127.95) scale(0.93)" opacity="0.92"><circle cx="0" cy="0.4" r="3.8" fill="#e8eef8"/><path d="M-2.4 2l2.4-4.4 2.6 4.4z" fill="#1a1a30"/><circle cx="0" cy="1.6" r="1.2" fill="#4a7fe0"/></g>
<path d="M11.10 131.15v1.9h-1.9z" fill="#d0d0d0"/>
<g transform="translate(17.35,127.95) scale(0.93)" opacity="0.92"><circle cx="-1.6" cy="1.6" r="1.3" fill="#4a7fe0"/><circle cx="2" cy="2.4" r="1.1" fill="#4a7fe0"/><circle cx="0.8" cy="-1.6" r="1" fill="#f2f2f2"/><path d="M-4 0.4l1 0.4M0.8-3.6v0.8" stroke="#f2f2f2" stroke-width="0.6"/></g>
<path d="M22.35 131.15v1.9h-1.9z" fill="#d0d0d0"/>
<g transform="translate(28.60,127.95) scale(0.93)" opacity="0.92"><path d="M-4-2.2c4-1.6 7 0.6 7.6 5.4" stroke="#f2f2f2" stroke-width="1" fill="none"/></g>
<path d="M33.60 131.15v1.9h-1.9z" fill="#d0d0d0"/>
<g transform="translate(39.85,127.95) scale(0.93)" opacity="0.92"><path d="M-3.6-2.4c3.4-1 5.6 0.4 6.4 4.4" stroke="#f2f2f2" stroke-width="0.9" fill="none"/><path d="M-1.4-4.4l1.6 2.6-1 2.2" stroke="#4a7fe0" stroke-width="1" fill="none"/><path d="M3.6 3l-1.4 1.4" stroke="#f2f2f2" stroke-width="0.7"/></g>
<path d="M44.85 131.15v1.9h-1.9z" fill="#d0d0d0"/>
<g transform="translate(6.10,139.20) scale(0.93)" opacity="0.92"><path d="M-3.8-4h7.6v2.2h-2.6v6h-2.4v-6h-2.6z" fill="#4a7fe0"/><path d="M-3.8-4h7.6" stroke="#a8c8ff" stroke-width="0.6"/></g>
<path d="M11.10 142.40v1.9h-1.9z" fill="#d0d0d0"/>
<g transform="translate(17.35,139.20) scale(0.93)" opacity="0.92"><path d="M-3.8 3.4l6.6-6" stroke="#9a9a9a" stroke-width="0.8"/><circle cx="-3.6" cy="3.4" r="0.9" fill="#f2f2f2"/><circle cx="3" cy="-2.8" r="1.2" fill="#4a7fe0"/><circle cx="-0.6" cy="0.4" r="0.7" fill="#f2f2f2"/></g>
<path d="M22.35 142.40v1.9h-1.9z" fill="#d0d0d0"/>
<g transform="translate(28.60,139.20) scale(0.93)" opacity="0.92"><path d="M-3.4-3.4l6.8 6.8M3.4-3.4l-6.8 6.8" stroke="#f2f2f2" stroke-width="0.5"/><rect x="-4.4" y="-4.4" width="2" height="2" fill="#4a7fe0"/><rect x="2.4" y="-4.4" width="2" height="2" fill="#4a7fe0"/><rect x="-4.4" y="2.4" width="2" height="2" fill="#4a7fe0"/><rect x="2.4" y="2.4" width="2" height="2" fill="#4a7fe0"/><rect x="-1" y="-1" width="2" height="2" fill="#4a7fe0"/></g>
<path d="M33.60 142.40v1.9h-1.9z" fill="#d0d0d0"/>
<g transform="translate(39.85,139.20) scale(0.93)" opacity="0.92"><path d="M-3.4-4v8" stroke="#f2f2f2" stroke-width="0.8"/><path d="M-2.4 2.4l5.6-5.6 1 1.6-4.8 5z" fill="#4a7fe0"/></g>
<path d="M44.85 142.40v1.9h-1.9z" fill="#d0d0d0"/>
<g transform="translate(6.10,150.45) scale(0.93)" opacity="0.92"><path d="M-4-2l3.6-1.8 4.4 1.2v4.4l-3.8 2-4.2-1.4z" fill="#4a7fe0"/><path d="M-4-2l4.2 1.4 3.8-1.8-4.4-1.2z" fill="#e8f0ff"/><path d="M-4 2.6l4.2 1.4" stroke="#fff" stroke-width="0.5"/></g>
<path d="M11.10 153.65v1.9h-1.9z" fill="#d0d0d0"/>
<g transform="translate(17.35,150.45) scale(0.93)" opacity="0.92"><path d="M-4 3.4h8" stroke="#f2f2f2" stroke-width="1.2"/><path d="M-2.8-3.6v6M-0.2-3.6v6M2.6-3.6v6" stroke="#f2f2f2" stroke-width="1.1"/><path d="M-3.8-2.8l1-1.6 1 1.6M-1.2-2.8l1-1.6 1 1.6M1.6-2.8l1-1.6 1 1.6" fill="#f2f2f2"/></g>
<path d="M22.35 153.65v1.9h-1.9z" fill="#d0d0d0"/>
<g transform="translate(28.60,150.45) scale(0.93)" opacity="0.92"><path d="M-4.2-4.2h8.4v8.4h-8.4zM-1.4-4.2v8.4M1.4-4.2v8.4M-4.2-1.4h8.4M-4.2 1.4h8.4" stroke="#c8c8d8" stroke-width="0.9" fill="#5a5a8a"/></g>
<path d="M33.60 153.65v1.9h-1.9z" fill="#d0d0d0"/>
<g transform="translate(39.85,150.45) scale(0.93)" opacity="0.92"><rect x="-1.4" y="-4.4" width="2.8" height="8.8" fill="#e8e8e8"/><rect x="-1.4" y="-2.8" width="2.8" height="1.3" fill="#c83030"/><rect x="-1.4" y="0" width="2.8" height="1.3" fill="#c83030"/><rect x="-1.4" y="2.6" width="2.8" height="1.3" fill="#c83030"/></g>
<path d="M44.85 153.65v1.9h-1.9z" fill="#d0d0d0"/>
<g transform="translate(6.10,161.70) scale(0.93)" opacity="0.92"><path d="M-3.8-3.6h2.8v7.6h-2.8z" fill="#f2f2f2"/><path d="M-0.2 3.8l1.4-7.8 2.6 0.6-1.6 7.6z" fill="#4a7fe0"/></g>
<path d="M11.10 164.90v1.9h-1.9z" fill="#d0d0d0"/>
<g transform="translate(17.35,161.70) scale(0.93)" opacity="0.92"><path d="M-2.6-4.2v8.6" stroke="#f2f2f2" stroke-width="0.7" stroke-dasharray="1.2 0.8"/><path d="M-0.2-4l1.4 3.6-1 4.4 2.6 0.2 1-4.4-1.6-3.8z" fill="#3a62c8"/></g>
<path d="M22.35 164.90v1.9h-1.9z" fill="#d0d0d0"/>
<g transform="translate(28.60,161.70) scale(0.93)" opacity="0.92"><path d="M-4.2 0.2l1.4-1 2 2.4 4.2-6 1.2 0.8-5.2 8z" fill="#f2f2f2"/></g>
<path d="M33.60 164.90v1.9h-1.9z" fill="#d0d0d0"/>
<g transform="translate(39.85,161.70) scale(0.93)" opacity="0.92"><path d="M-3.8 2.6l2.6-5.8 2.8 5.8z" fill="#d0d0d0"/><path d="M0.4 2.6l1.6-3.6 2 3.6z" fill="#888"/><path d="M-2.2-2.8h4.8" stroke="#eee" stroke-width="0.5"/></g>
<path d="M44.85 164.90v1.9h-1.9z" fill="#d0d0d0"/>
<g transform="translate(6.10,172.95) scale(0.93)" opacity="0.92"><path d="M-3.6 2.4l3.4-3 3.6 2.6-3.4 2.4z" fill="#e0b830"/><path d="M-3.6 2.4l3.4-3 1.2 0.9-3 2.9z" fill="#f4dc70"/><path d="M0.2-3.6l2.2-0.5" stroke="#e8e8e8" stroke-width="0.7"/></g>
<path d="M11.10 176.15v1.9h-1.9z" fill="#d0d0d0"/>
<rect x="1.20" y="346.20" width="45.70" height="0.60" fill="#404040" />
<text x="2.60" y="352.67" textLength="14.40" lengthAdjust="spacingAndGlyphs" font-size="5.2" fill="#7e7e7e" font-weight="normal" font-family="Liberation Sans" >OSnap</text>
<circle cx="43.4" cy="350.6" r="1.36" fill="none" stroke="#e8e8e8" stroke-width="1.44"/>
<circle cx="43.4" cy="350.6" r="2.32" fill="none" stroke="#e8e8e8" stroke-width="0.80" stroke-dasharray="0.88 0.94"/>
<rect x="15.00" y="355.40" width="31.90" height="7.30" fill="#444444" rx="0.8"/>
<circle cx="7.6" cy="359.2" r="2.6" fill="none" stroke="#f2f2f2" stroke-width="0.55"/><path d="M6.8 359.3h2.6" stroke="#f2f2f2" stroke-width="0.9"/><circle cx="10.4" cy="359.3" r="0.7" fill="#f2f2f2"/>
<path d="M20.4 357.2h4.6l-1.7 2.2v2.4l-1.2-0.7v-1.7z" fill="#f2f2f2"/><path d="M19.2 361.8h1" stroke="#f2f2f2" stroke-width="0.5"/>
<rect x="2.10" y="365.10" width="5.40" height="5.20" fill="#565656" />
<text x="9.90" y="369.77" textLength="7.65" lengthAdjust="spacingAndGlyphs" font-size="5.2" fill="#f2f2f2" font-weight="normal" font-family="Liberation Sans" >End</text>
<rect x="2.10" y="371.50" width="5.40" height="5.20" fill="#565656" />
<text x="9.90" y="376.17" textLength="10.25" lengthAdjust="spacingAndGlyphs" font-size="5.2" fill="#f2f2f2" font-weight="normal" font-family="Liberation Sans" >Near</text>
<rect x="2.10" y="377.90" width="5.40" height="5.20" fill="#565656" />
<text x="9.90" y="382.57" textLength="10.95" lengthAdjust="spacingAndGlyphs" font-size="5.2" fill="#f2f2f2" font-weight="normal" font-family="Liberation Sans" >Point</text>
<rect x="2.10" y="384.30" width="5.40" height="5.20" fill="#565656" />
<text x="9.90" y="388.97" textLength="8.05" lengthAdjust="spacingAndGlyphs" font-size="5.2" fill="#f2f2f2" font-weight="normal" font-family="Liberation Sans" >Mid</text>
<rect x="2.10" y="390.70" width="5.40" height="5.20" fill="#565656" />
<text x="9.90" y="395.37" textLength="8.05" lengthAdjust="spacingAndGlyphs" font-size="5.2" fill="#f2f2f2" font-weight="normal" font-family="Liberation Sans" >Cen</text>
<rect x="2.10" y="397.10" width="5.40" height="5.20" fill="#565656" />
<text x="9.90" y="401.77" textLength="5.45" lengthAdjust="spacingAndGlyphs" font-size="5.2" fill="#f2f2f2" font-weight="normal" font-family="Liberation Sans" >Int</text>
<rect x="2.10" y="403.50" width="5.40" height="5.20" fill="#565656" />
<text x="9.90" y="408.17" textLength="9.45" lengthAdjust="spacingAndGlyphs" font-size="5.2" fill="#f2f2f2" font-weight="normal" font-family="Liberation Sans" >Perp</text>
<rect x="2.10" y="409.90" width="5.40" height="5.20" fill="#565656" />
<text x="9.90" y="414.57" textLength="6.95" lengthAdjust="spacingAndGlyphs" font-size="5.2" fill="#f2f2f2" font-weight="normal" font-family="Liberation Sans" >Tan</text>
<rect x="2.10" y="416.30" width="5.40" height="5.20" fill="#565656" />
<text x="9.90" y="420.97" textLength="10.95" lengthAdjust="spacingAndGlyphs" font-size="5.2" fill="#f2f2f2" font-weight="normal" font-family="Liberation Sans" >Quad</text>
<rect x="2.10" y="422.70" width="5.40" height="5.20" fill="#565656" />
<text x="9.90" y="427.37" textLength="9.85" lengthAdjust="spacingAndGlyphs" font-size="5.2" fill="#f2f2f2" font-weight="normal" font-family="Liberation Sans" >Knot</text>
<rect x="2.10" y="429.10" width="5.40" height="5.20" fill="#565656" />
<text x="9.90" y="433.77" textLength="12.05" lengthAdjust="spacingAndGlyphs" font-size="5.2" fill="#f2f2f2" font-weight="normal" font-family="Liberation Sans" >Vertex</text>
<rect x="2.10" y="435.50" width="5.40" height="5.20" fill="#565656" />
<text x="9.90" y="440.17" textLength="14.25" lengthAdjust="spacingAndGlyphs" font-size="5.2" fill="#f2f2f2" font-weight="normal" font-family="Liberation Sans" >Project</text>
<rect x="2.10" y="448.20" width="5.40" height="5.20" fill="#565656" />
<text x="9.90" y="452.87" textLength="14.70" lengthAdjust="spacingAndGlyphs" font-size="5.2" fill="#f2f2f2" font-weight="normal" font-family="Liberation Sans" >Disable</text>
<rect x="346.90" y="199.10" width="330.30" height="242.00" fill="#f5f5f5" />
<rect x="346.90" y="208.90" width="208.50" height="232.20" fill="#ffffff" />
<rect x="346.90" y="208.50" width="131.50" height="0.50" fill="#e2e2e2" />
<rect x="525.00" y="208.50" width="30.60" height="0.50" fill="#e2e2e2" />
<rect x="478.40" y="199.10" width="46.60" height="10.00" fill="#ffffff" />
<rect x="478.10" y="199.10" width="0.40" height="9.60" fill="#dcdcdc" />
<rect x="525.00" y="199.10" width="0.40" height="9.60" fill="#dcdcdc" />
<rect x="555.20" y="208.90" width="0.50" height="232.20" fill="#d4d4d4" />
<text x="364.60" y="206.14" textLength="11.30" lengthAdjust="spacingAndGlyphs" font-size="5.4" fill="#444" font-weight="normal" font-family="Liberation Sans" >New</text>
<text x="408.60" y="206.14" textLength="16.40" lengthAdjust="spacingAndGlyphs" font-size="5.4" fill="#444" font-weight="normal" font-family="Liberation Sans" >Recent</text>
<text x="450.30" y="206.14" textLength="17.70" lengthAdjust="spacingAndGlyphs" font-size="5.4" fill="#444" font-weight="normal" font-family="Liberation Sans" >Open...</text>
<text x="493.00" y="206.14" textLength="17.60" lengthAdjust="spacingAndGlyphs" font-size="5.4" fill="#444" font-weight="normal" font-family="Liberation Sans" >License</text>
<path d="M671.2 201.2l4 4M675.2 201.2l-4 4" stroke="#a0a0a0" stroke-width="0.6"/>
<text x="558.75" y="214.34" textLength="15.25" lengthAdjust="spacingAndGlyphs" font-size="5.4" fill="#111" font-weight="bold" font-family="Liberation Sans" >News:</text>
<text x="558.75" y="298.34" textLength="12.25" lengthAdjust="spacingAndGlyphs" font-size="5.4" fill="#111" font-weight="bold" font-family="Liberation Sans" >Tips:</text>
<rect x="354" y="226.8" width="21.3" height="23.3" fill="#fff" stroke="#a6a6a6" stroke-width="0.8"/>
<path d="M357.35 235.10L359.19 233.33L361.48 232.47L363.12 233.33L364.76 236.28L366.08 239.56L369.69 233.00L374.93 225.78L380.84 219.87L385.43 216.92L388.06 216.07L387.73 217.58L384.12 221.19L378.87 227.75L374.28 234.31L369.69 241.53L368.70 244.15L367.06 245.46L364.44 247.76L362.80 244.81L361.15 240.22L359.19 236.61z" fill="#2b850a" stroke="#2b850a" stroke-width="0.3" stroke-linejoin="round"/>
<text x="397.00" y="225.21" textLength="93.50" lengthAdjust="spacingAndGlyphs" font-size="9.9" fill="#1d8a1d" font-weight="bold" font-family="Liberation Sans" >Your license is valid.</text>
<text x="396.20" y="238.92" textLength="51.80" lengthAdjust="spacingAndGlyphs" font-size="5.9" fill="#111" font-weight="bold" font-family="Liberation Sans" >Your license is valid</text>
<text x="396.20" y="245.72" textLength="49.80" lengthAdjust="spacingAndGlyphs" font-size="5.9" fill="#111" font-weight="bold" font-family="Liberation Sans" >and never expires.</text>
<rect x="399.2" y="252.6" width="118.6" height="19" fill="#f4f4f4" stroke="#e2e2e2" stroke-width="0.4"/>
<g transform="translate(401.6,255.6)"><path d="M1 11.4l6-7.2 1.6 1.4-4.2 4.8-0.6-0.4-0.8 1-0.6-0.4-0.6 1z" fill="#d8a020"/><circle cx="9" cy="3.6" r="3.5" fill="#f2c832"/><circle cx="10.2" cy="2.4" r="1" fill="#fff8d8"/></g>
<text x="415.00" y="263.76" textLength="49.20" lengthAdjust="spacingAndGlyphs" font-size="4.9" fill="#333" font-weight="normal" font-family="Liberation Sans" >Change my License Key</text>
<text x="396.60" y="279.92" textLength="145.30" lengthAdjust="spacingAndGlyphs" font-size="4.5" fill="#8f8f8f" font-weight="normal" font-family="Liberation Sans" >Rhinoceros is a registered trademark of Robert McNeel &amp; Associates.</text>
<text x="396.60" y="286.52" textLength="141.40" lengthAdjust="spacingAndGlyphs" font-size="4.5" fill="#8f8f8f" font-weight="normal" font-family="Liberation Sans" >Rhino and Rhino3D are trademarks of Robert McNeel &amp; Associates.</text>
<text x="396.60" y="299.82" textLength="96.80" lengthAdjust="spacingAndGlyphs" font-size="4.5" fill="#8f8f8f" font-weight="normal" font-family="Liberation Sans" >Rhino uses open source libraries. Learn more...</text>
<text x="560.20" y="378.83" textLength="13.80" lengthAdjust="spacingAndGlyphs" font-size="3.7" fill="#b0b0b0" font-weight="normal" font-family="Liberation Sans" >Version 8</text>
<text x="560.20" y="383.73" textLength="47.50" lengthAdjust="spacingAndGlyphs" font-size="3.7" fill="#b0b0b0" font-weight="normal" font-family="Liberation Sans" >(8.0.23304.9001, 2023-10-31)</text>
<text x="560.20" y="388.73" textLength="18.80" lengthAdjust="spacingAndGlyphs" font-size="3.7" fill="#b0b0b0" font-weight="normal" font-family="Liberation Sans" >Commercial</text>
<text x="560.20" y="393.33" textLength="46.80" lengthAdjust="spacingAndGlyphs" font-size="3.7" fill="#b0b0b0" font-weight="normal" font-family="Liberation Sans" >SN: 6-1800-0501-1-****-****</text>
<text x="561.20" y="421.60" textLength="54.40" lengthAdjust="spacingAndGlyphs" font-size="19.3" fill="#9c0a0e" font-weight="bold" font-family="Liberation Sans" >Rhino</text>
<text x="615.80" y="421.60" textLength="51.20" lengthAdjust="spacingAndGlyphs" font-size="19.3" fill="#808080" font-weight="bold" font-family="Liberation Sans" >ceros</text>
<text x="667.20" y="412.56"  font-size="4.6" fill="#8a8a8a" font-weight="normal" font-family="Liberation Sans" >®</text>
<text x="561.40" y="428.45" textLength="110.40" lengthAdjust="spacingAndGlyphs" font-size="5.7" fill="#4a4a4a" font-weight="normal" font-family="Liberation Sans" >design, model, present, analyze, realize...</text>
<text x="559.30" y="437.20" textLength="81.60" lengthAdjust="spacingAndGlyphs" font-size="3.6" fill="#b4b4b4" font-weight="normal" font-family="Liberation Sans" >Copyright 1993-2023  Robert McNeel &amp; Associates</text>
<g transform="translate(346,356) scale(0.13280)">
<defs><filter id="bl" x="-20%" y="-50%" width="140%" height="200%"><feGaussianBlur stdDeviation="14"/></filter><linearGradient id="lg1" x1="0" y1="0" x2="1" y2="1"><stop offset="0" stop-color="#fafafa"/><stop offset="1" stop-color="#dcdcdc"/></linearGradient></defs>
<ellipse cx="400" cy="548" rx="220" ry="13" fill="#e9e9e9" filter="url(#bl)"/>
<path d="M165 115Q190 98 215 94L268 92Q276 150 262 210Q252 245 238 272L222 286Q200 272 186 256Q196 215 190 180Q182 145 165 115z" fill="url(#lg1)" stroke="#d2d2d2" stroke-width="2.5"/>
<path d="M92 252Q130 236 190 258Q245 285 275 340L298 412 290 420Q262 355 215 322Q170 300 120 312L95 302Q84 276 92 252z" fill="url(#lg1)" stroke="#d2d2d2" stroke-width="2.5"/>
<path d="M318 115Q352 145 375 185L395 240Q350 278 300 300L258 312 250 296Q285 245 300 180z" fill="url(#lg1)" stroke="#d2d2d2" stroke-width="2.5"/>
<path d="M400 255Q430 290 450 320Q485 328 520 318Q505 350 470 360L420 350Q385 332 350 336L318 342 305 325Q350 292 400 255z" fill="#efefef" stroke="#d2d2d2" stroke-width="2.5"/>
<path d="M672 283Q640 345 580 400L525 442Q518 405 488 382Q520 372 560 355Q615 325 672 283z" fill="url(#lg1)" stroke="#d2d2d2" stroke-width="2.5"/>
<ellipse cx="465" cy="432" rx="60" ry="48" fill="#e9e9e9" stroke="#c4c4c4" stroke-width="3"/><ellipse cx="452" cy="416" rx="36" ry="24" fill="#f8f8f8"/>
<path d="M322 345V410L400 440 450 510 482 522 496 488 476 470" stroke="#d0d0d0" stroke-width="6" fill="none"/>
<path d="M410 455Q440 500 470 505" stroke="#bcbcbc" stroke-width="5" fill="none"/>
<path d="M200 110Q230 100 255 104Q250 170 232 230" stroke="#fafafa" stroke-width="10" fill="none"/>
<path d="M330 150Q360 190 372 235" stroke="#fafafa" stroke-width="10" fill="none"/>
<rect x="358" y="360" width="14" height="9" fill="#dc8080"/>
</g>
<rect x="1009.40" y="62.00" width="14.70" height="7.10" fill="#303030" rx="1"/>
<circle cx="1019.2" cy="65.6" r="1.36" fill="none" stroke="#e8e8e8" stroke-width="1.44"/>
<circle cx="1019.2" cy="65.6" r="2.32" fill="none" stroke="#e8e8e8" stroke-width="0.80" stroke-dasharray="0.88 0.94"/>
<rect x="1009.40" y="69.10" width="5.10" height="562.00" fill="#333333" />
<rect x="1010.30" y="72.00" width="3.60" height="9.00" fill="#686868" rx="0.6"/>
<rect x="1010.80" y="83.00" width="2.80" height="5.80" fill="#626262" rx="0.5"/>
<rect x="1010.10" y="90.70" width="3.80" height="540.20" fill="#ffffff" />
<g transform="translate(1019.4,77)"><path d="M-3.4-1.4l3.4-1.8 3.4 1.8-3.4 1.8z" fill="#f08a3a"/><path d="M-3.4 0l3.4 1.8 3.4-1.8-3.4-1z" fill="#e03a3a"/><path d="M-3.4 1.4l3.4 1.9 3.4-1.9-3.4-0.8z" fill="#3a4ab0"/></g>
<g transform="translate(1019.6,91.6)"><path d="M0.00 -3.20A3.2 3.2 0 0 1 2.37 -2.15L1.04 -0.94A1.4 1.4 0 0 0 0.00 -1.40z" fill="#ff2020"/><path d="M2.26 -2.26A3.2 3.2 0 0 1 3.20 0.16L1.40 0.07A1.4 1.4 0 0 0 0.99 -0.99z" fill="#ff9a00"/><path d="M3.20 0.00A3.2 3.2 0 0 1 2.15 2.37L0.94 1.04A1.4 1.4 0 0 0 1.40 0.00z" fill="#ffe800"/><path d="M2.26 2.26A3.2 3.2 0 0 1 -0.16 3.20L-0.07 1.40A1.4 1.4 0 0 0 0.99 0.99z" fill="#40e020"/><path d="M0.00 3.20A3.2 3.2 0 0 1 -2.37 2.15L-1.04 0.94A1.4 1.4 0 0 0 0.00 1.40z" fill="#00d0c0"/><path d="M-2.26 2.26A3.2 3.2 0 0 1 -3.20 -0.16L-1.40 -0.07A1.4 1.4 0 0 0 -0.99 0.99z" fill="#2060ff"/><path d="M-3.20 0.00A3.2 3.2 0 0 1 -2.15 -2.37L-0.94 -1.04A1.4 1.4 0 0 0 -1.40 0.00z" fill="#9020e0"/><path d="M-2.26 -2.26A3.2 3.2 0 0 1 0.16 -3.20L0.07 -1.40A1.4 1.4 0 0 0 -0.99 -0.99z" fill="#ff20b0"/></g>
<g transform="translate(1019.5,105)"><rect x="-2.8" y="-2.2" width="5.6" height="3.8" fill="#f0f0f0" rx="0.4"/><rect x="-1.4" y="1.6" width="2.8" height="1" fill="#222"/></g>
<rect x="1014.80" y="113.20" width="9.20" height="13.60" fill="#333333" rx="1.6"/>
<g transform="translate(1019.6,120)"><rect x="-3" y="-2.4" width="6" height="4.8" fill="#3a5ad8" rx="0.5"/><rect x="-3" y="-2.4" width="6" height="1.2" fill="#c8d8ff"/><path d="M-1.2 0.2h1M0.4 0.2h1" stroke="#c8d8ff" stroke-width="0.9"/></g>
<rect x="1.20" y="630.90" width="1022.80" height="7.90" fill="#333333" rx="1"/>
<rect x="49" y="623.3" width="30.6" height="7.4" fill="#333" stroke="#909090" stroke-width="0.45"/>
<text x="53.00" y="628.77" textLength="24.00" lengthAdjust="spacingAndGlyphs" font-size="5.2" fill="#f4f4f4" font-weight="normal" font-family="Liberation Sans" >Perspective</text>
<text x="82.30" y="628.77" textLength="7.30" lengthAdjust="spacingAndGlyphs" font-size="5.2" fill="#787878" font-weight="normal" font-family="Liberation Sans" >Top</text>
<text x="96.60" y="628.77" textLength="11.40" lengthAdjust="spacingAndGlyphs" font-size="5.2" fill="#787878" font-weight="normal" font-family="Liberation Sans" >Front</text>
<text x="113.90" y="628.77" textLength="10.60" lengthAdjust="spacingAndGlyphs" font-size="5.2" fill="#787878" font-weight="normal" font-family="Liberation Sans" >Right</text>
<path d="M132.2 625.2v3.4M130.5 626.9h3.4" stroke="#f0f0f0" stroke-width="0.9"/>
<rect x="2.5" y="632" width="6.4" height="6" fill="#858585"/><rect x="5" y="633" width="1.9" height="4" fill="#333"/>
<text x="16.60" y="636.94" textLength="14.30" lengthAdjust="spacingAndGlyphs" font-size="5.1" fill="#d0d0d0" font-weight="normal" font-family="Liberation Sans" >CPlane</text>
<text x="52.00" y="636.94" textLength="44.30" lengthAdjust="spacingAndGlyphs" font-size="5.1" fill="#d0d0d0" font-weight="normal" font-family="Liberation Sans" >X 16.222 Y -0.752 Z 0</text>
<text x="117.90" y="636.94" textLength="23.10" lengthAdjust="spacingAndGlyphs" font-size="5.1" fill="#d0d0d0" font-weight="normal" font-family="Liberation Sans" >Millimeters</text>
<text x="160.40" y="636.94" textLength="13.90" lengthAdjust="spacingAndGlyphs" font-size="5.1" fill="#d0d0d0" font-weight="normal" font-family="Liberation Sans" >Default</text>
<text x="230.50" y="636.94" textLength="20.70" lengthAdjust="spacingAndGlyphs" font-size="5.1" fill="#b4b4b4" font-weight="normal" font-family="Liberation Sans" >Grid Snap</text>
<text x="259.00" y="636.94" textLength="12.50" lengthAdjust="spacingAndGlyphs" font-size="5.1" fill="#b4b4b4" font-weight="normal" font-family="Liberation Sans" >Ortho</text>
<text x="279.80" y="636.94" textLength="13.20" lengthAdjust="spacingAndGlyphs" font-size="5.1" fill="#b4b4b4" font-weight="normal" font-family="Liberation Sans" >Planar</text>
<text x="356.70" y="636.94" textLength="36.30" lengthAdjust="spacingAndGlyphs" font-size="5.1" fill="#8c8c8c" font-weight="normal" font-family="Liberation Sans" >Gumball (CPlane)</text>
<text x="463.40" y="636.94" textLength="30.80" lengthAdjust="spacingAndGlyphs" font-size="5.1" fill="#8c8c8c" font-weight="normal" font-family="Liberation Sans" >Record History</text>
<text x="523.00" y="636.94" textLength="52.50" lengthAdjust="spacingAndGlyphs" font-size="5.1" fill="#b0b0b0" font-weight="normal" font-family="Liberation Sans" >Minutes from last save: 9</text>
<rect x="151.1" y="632.3" width="5.8" height="5.9" fill="#000" stroke="#a8a8a8" stroke-width="0.5" rx="0.5"/>
<rect x="297.30" y="631.50" width="20.40" height="7.20" fill="#101010" rx="0.6"/>
<text x="300.90" y="636.94" textLength="14.00" lengthAdjust="spacingAndGlyphs" font-size="5.1" fill="#ffffff" font-weight="bold" font-family="Liberation Sans" >Osnap</text>
<rect x="319.20" y="631.50" width="30.80" height="7.20" fill="#101010" rx="0.6"/>
<text x="322.30" y="636.94" textLength="25.80" lengthAdjust="spacingAndGlyphs" font-size="5.1" fill="#ffffff" font-weight="bold" font-family="Liberation Sans" >SmartTrack</text>
<rect x="397.70" y="631.50" width="60.60" height="7.20" fill="#101010" rx="0.6"/>
<text x="409.00" y="636.94" textLength="47.70" lengthAdjust="spacingAndGlyphs" font-size="5.1" fill="#ffffff" font-weight="bold" font-family="Liberation Sans" >Auto CPlane (Object)</text>
<rect x="499.70" y="631.50" width="17.20" height="7.20" fill="#101010" rx="0.6"/>
<text x="502.80" y="636.94" textLength="11.20" lengthAdjust="spacingAndGlyphs" font-size="5.1" fill="#ffffff" font-weight="bold" font-family="Liberation Sans" >Filter</text>
<g transform="translate(402.6,635.2)"><rect x="-1.5" y="-0.4" width="3" height="2.4" fill="#f0f0f0" rx="0.3"/><path d="M-0.9-0.4v-0.8a0.9 0.9 0 0 1 1.8 0v0.8" stroke="#f0f0f0" stroke-width="0.5" fill="none"/></g>
<rect x="1015.2" y="632.9" width="6.2" height="5.2" fill="#777" /><rect x="1017" y="633.8" width="2" height="3.4" fill="#333"/>
<g>
<path d="M971.02 555.86C970.35 556.05 968.40 557.05 967.03 557.03C965.66 557.01 964.30 556.15 962.81 555.72C961.33 555.29 959.84 554.80 958.13 554.45C956.41 554.11 954.22 553.66 952.50 553.66C950.78 553.66 949.38 553.89 947.81 554.45C946.25 555.02 944.61 555.82 943.13 557.03C941.64 558.24 940.16 559.92 938.91 561.72C937.66 563.52 936.45 565.70 935.63 567.81C934.80 569.92 934.31 572.37 933.98 574.38C933.66 576.39 933.54 577.71 933.66 579.88C933.77 582.04 933.97 585.03 934.69 587.38C935.41 589.72 936.56 591.98 937.97 593.94C939.38 595.89 941.17 597.77 943.13 599.09C945.08 600.42 947.50 601.36 949.69 601.91C951.88 602.45 954.22 602.61 956.25 602.38C958.28 602.14 960.16 601.52 961.88 600.50C963.59 599.48 965.39 597.84 966.56 596.28C967.73 594.72 968.42 592.69 968.91 591.13C969.39 589.56 969.51 587.92 969.47 586.91C969.43 585.89 968.81 585.34 968.67 585.03L967.03 585.50C966.88 586.20 966.64 588.23 966.09 589.72C965.55 591.20 964.77 593.00 963.75 594.41C962.73 595.81 961.41 597.38 960.00 598.16C958.59 598.94 956.95 599.25 955.31 599.09C953.67 598.94 951.80 598.39 950.16 597.22C948.52 596.05 946.72 594.09 945.47 592.06C944.22 590.03 943.28 587.38 942.66 585.03C942.03 582.69 941.80 580.56 941.72 578.00C941.64 575.44 941.88 572.01 942.19 569.69C942.50 567.36 942.89 565.78 943.59 564.06C944.30 562.34 945.16 560.55 946.41 559.38C947.66 558.20 949.45 557.34 951.09 557.03C952.73 556.72 954.69 556.99 956.25 557.50C957.81 558.01 959.38 559.06 960.47 560.08C961.56 561.09 962.15 562.19 962.81 563.59C963.48 565.00 964.18 567.70 964.45 568.52z" fill="#0a9bff"/>
<path d="M960.94 561.48C960.47 561.13 959.38 559.84 958.13 559.38C956.88 558.91 955.00 558.55 953.44 558.67C951.88 558.79 950.00 559.18 948.75 560.08C947.50 560.98 946.64 562.46 945.94 564.06C945.23 565.66 944.84 567.36 944.53 569.69C944.22 572.01 943.98 575.44 944.06 578.00C944.14 580.56 944.45 582.84 945.00 585.03C945.55 587.22 946.41 589.33 947.34 591.13C948.28 592.92 949.69 594.76 950.63 595.81C951.56 596.87 952.58 597.18 952.97 597.45" fill="none" stroke="#0a9bff" stroke-width="0.8"/>
<path d="M972.42 586.91C972.31 587.77 972.23 590.34 971.72 592.06C971.21 593.78 970.47 595.58 969.38 597.22C968.28 598.86 966.88 600.62 965.16 601.91C963.44 603.20 961.02 604.33 959.06 604.95C957.11 605.58 955.16 605.70 953.44 605.66C951.72 605.62 950.23 605.34 948.75 604.72C947.27 604.09 945.23 602.38 944.53 601.91" fill="none" stroke="#0a9bff" stroke-width="0.8"/>
<path d="M973.59 557.27L966.80 569.92" fill="none" stroke="#0a9bff" stroke-width="0.8"/>
<text x="945.3" y="584.7" font-size="21.5" font-family="Liberation Serif" font-weight="bold" fill="#141414" textLength="15.2" lengthAdjust="spacingAndGlyphs">A</text>
<text x="961.7" y="584.7" font-size="21.5" font-family="Liberation Serif" font-weight="bold" fill="#22d422" textLength="5.9" lengthAdjust="spacingAndGlyphs">I</text>
<text x="907.50" y="614.76" textLength="95.00" lengthAdjust="spacingAndGlyphs" font-size="8" fill="#2e2e2e" font-weight="normal" font-family="Liberation Sans" >www.aportesingecivil.com</text>
</g>
</svg>
</body></html>
